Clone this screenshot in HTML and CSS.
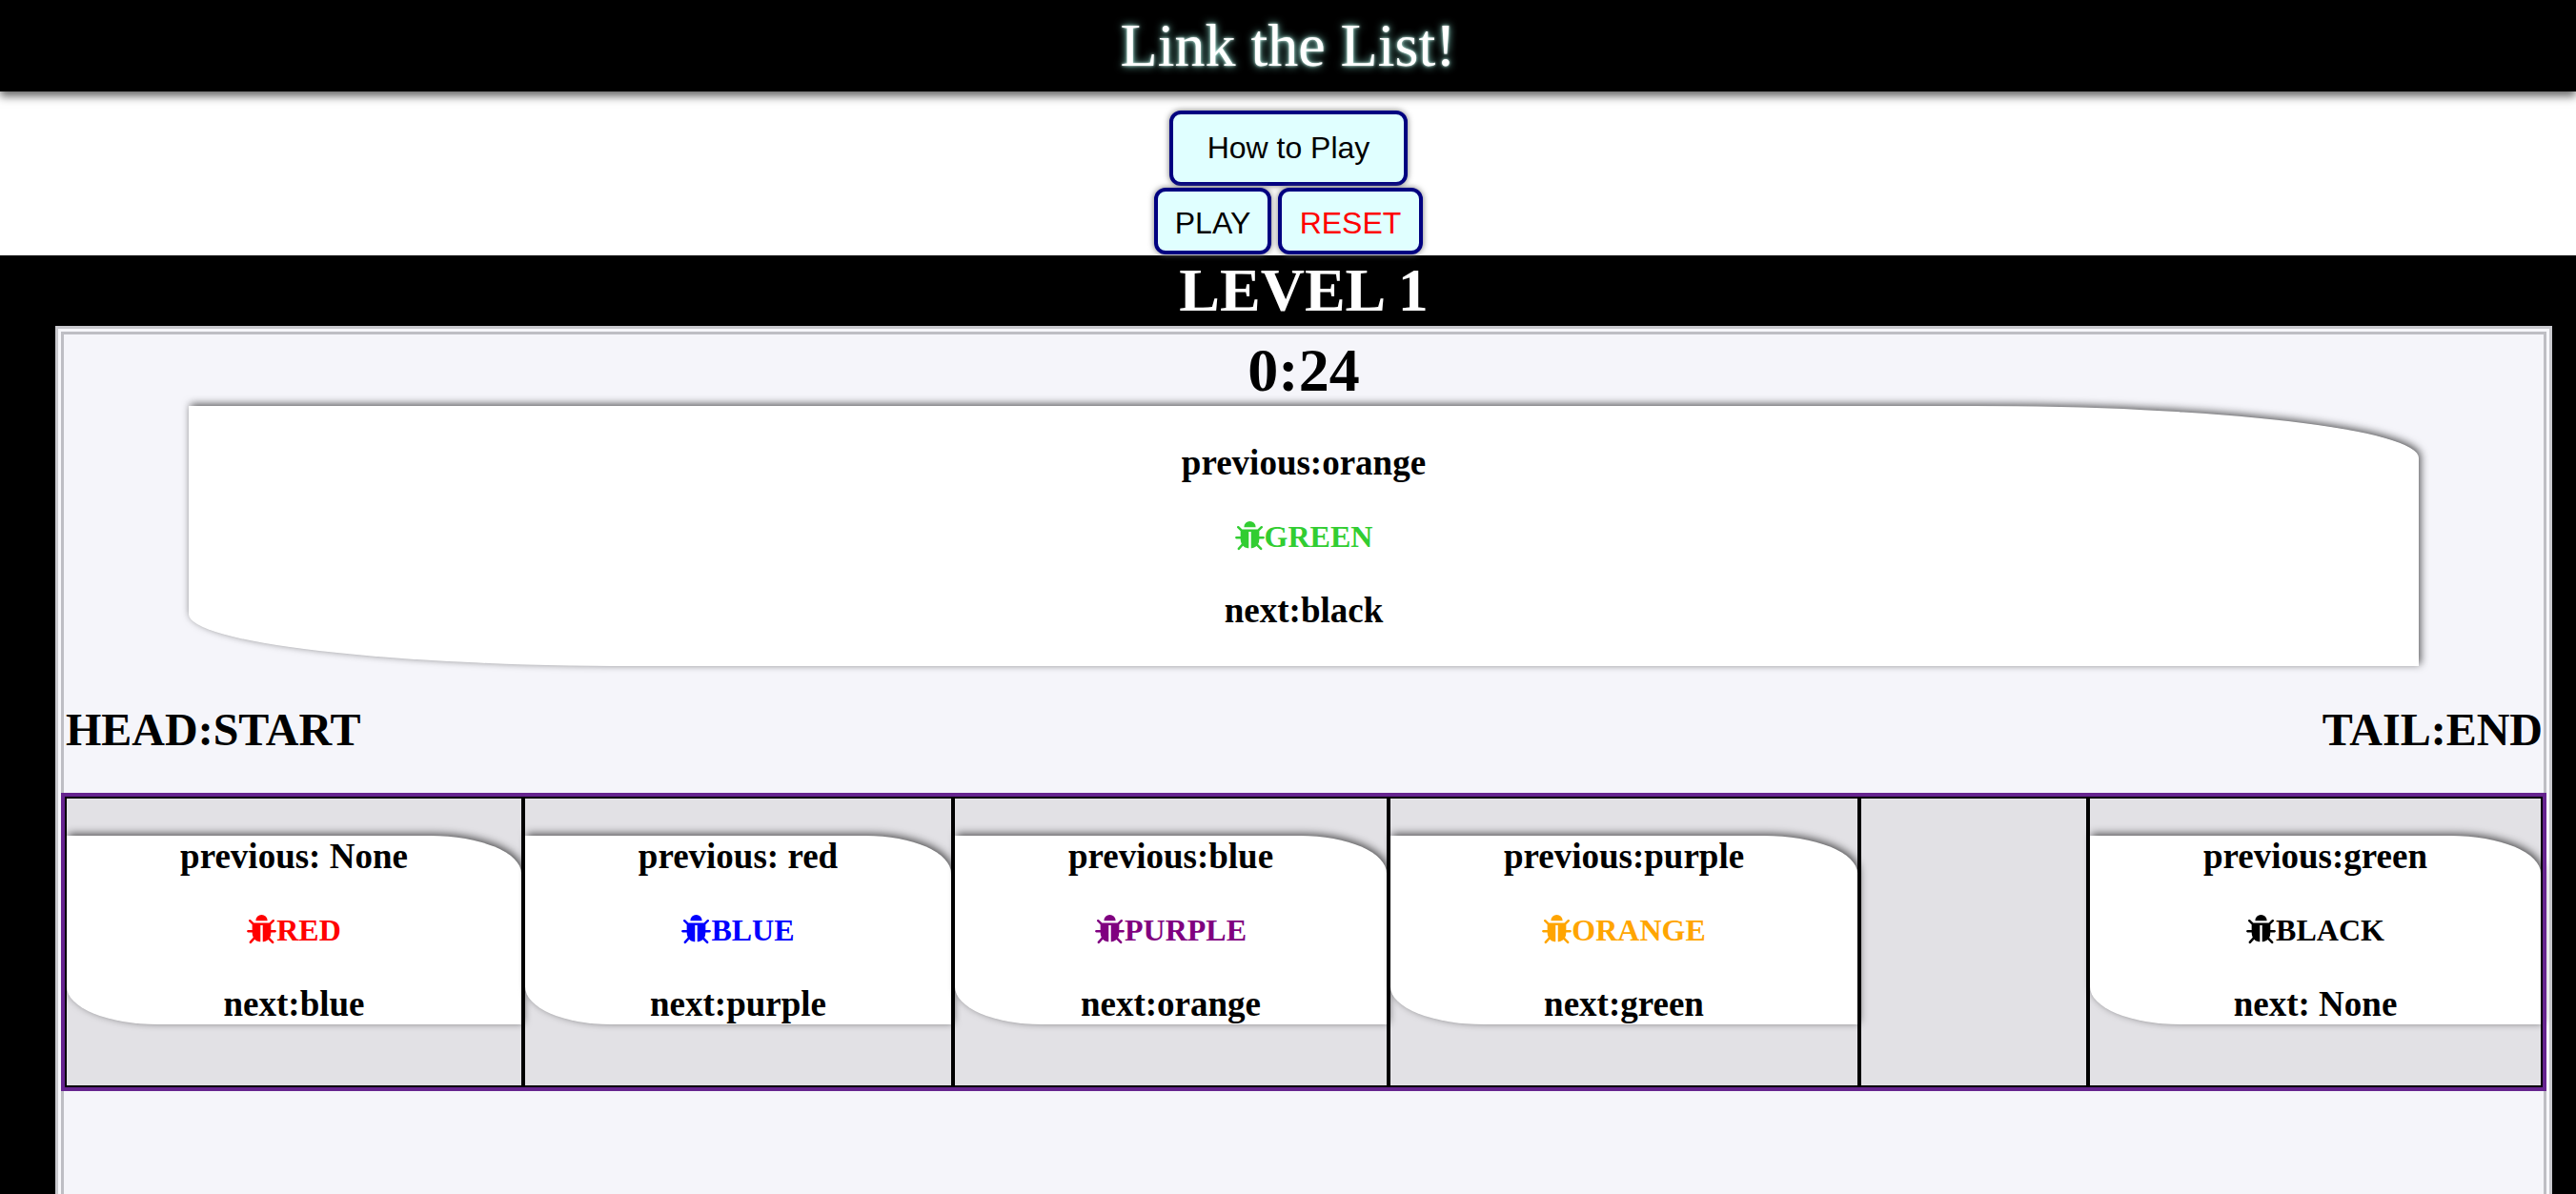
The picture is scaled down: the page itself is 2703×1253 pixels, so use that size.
FILE: index.html
```html
<!DOCTYPE html>
<html lang="en">
<head>
  <meta charset="UTF-8" />
  <title>Link the List!</title>
  <link rel="stylesheet" href="styles.css">
</head>
<body>
  <svg class="icon-defs" aria-hidden="true">
    <symbol id="bug" viewBox="96 64 1600 1664">
      <path d="M1696 960q0 26-19 45t-45 19h-224q0 171-67 290l208 209q19 19 19 45t-19 45q-18 19-45 19t-45-19l-198-197q-5 5-15 13t-42 28.5-65 36.5-82 29-97 13v-896h-128v896q-51 0-101.5-13.5t-87-33-66-39-43.5-32.5l-15-14-183 207q-20 21-48 21-24 0-43-16-19-18-20.5-44.5t15.5-46.5l202-227q-58-114-58-274h-224q-26 0-45-19t-19-45 19-45 45-19h224v-294l-173-173q-19-19-19-45t19-45 45-19 45 19l173 173h844l173-173q19-19 45-19t45 19 19 45-19 45l-173 173v294h224q26 0 45 19t19 45zm-480-576h-640q0-133 93.5-226.5t226.5-93.5 226.5 93.5 93.5 226.5z"/>
    </symbol>
  </svg>

  <header class="top-bar">
    <h1>Link the List!</h1>
  </header>

  <div class="controls">
    <button class="btn btn-help">How to Play</button>
    <div class="btn-row">
      <button class="btn btn-play">PLAY</button>
      <button class="btn btn-reset">RESET</button>
    </div>
  </div>

  <main class="game">
    <h2 class="level">LEVEL 1</h2>
    <section class="board">
      <div class="timer">0:24</div>

      <div class="node node-active">
        <p>previous:orange</p>
        <p class="bug-name green"><svg class="bug"><use href="#bug"/></svg>GREEN</p>
        <p>next:black</p>
      </div>

      <div class="ends">
        <span>HEAD:START</span>
        <span>TAIL:END</span>
      </div>

      <div class="list">
        <div class="slot">
          <div class="node">
            <p>previous: None</p>
            <p class="bug-name red"><svg class="bug"><use href="#bug"/></svg>RED</p>
            <p>next:blue</p>
          </div>
        </div>
        <div class="slot">
          <div class="node">
            <p>previous: red</p>
            <p class="bug-name blue"><svg class="bug"><use href="#bug"/></svg>BLUE</p>
            <p>next:purple</p>
          </div>
        </div>
        <div class="slot">
          <div class="node">
            <p>previous:blue</p>
            <p class="bug-name purple"><svg class="bug"><use href="#bug"/></svg>PURPLE</p>
            <p>next:orange</p>
          </div>
        </div>
        <div class="slot">
          <div class="node">
            <p>previous:purple</p>
            <p class="bug-name orange"><svg class="bug"><use href="#bug"/></svg>ORANGE</p>
            <p>next:green</p>
          </div>
        </div>
        <div class="slot"></div>
        <div class="slot">
          <div class="node">
            <p>previous:green</p>
            <p class="bug-name black"><svg class="bug"><use href="#bug"/></svg>BLACK</p>
            <p>next: None</p>
          </div>
        </div>
      </div>
    </section>
  </main>
</body>
</html>
```

FILE: styles.css
```css
html, body {
  height: 100%;
}
body {
  margin: 0;
  overflow: hidden;
  background-color: #ffffff;
  font-family: "Liberation Serif", "Times New Roman", serif;
  color: #000000;
}
.icon-defs {
  display: none;
}
.top-bar {
  position: relative;
  z-index: 1;
  height: 96px;
  background-color: #000000;
  box-shadow: 0 5px 9px #666666;
  text-align: center;
}
.top-bar h1 {
  margin: 0;
  font-size: 64px;
  font-weight: normal;
  line-height: 96px;
  color: #ffffff;
  text-shadow: 0 0 3px #d8fff4, 0 0 8px #8fe8d8;
}
.controls {
  display: flex;
  flex-direction: column;
  align-items: center;
  gap: 2px;
  height: 172px;
  padding: 20px 0 0 1px;
  box-sizing: border-box;
}
.btn-row {
  display: flex;
  gap: 7px;
}
.btn {
  box-sizing: border-box;
  height: 70px;
  padding: 5px 0 0;
  border: 4px solid #000080;
  border-radius: 12px;
  background-color: #e0ffff;
  box-shadow: 0 0 6px #777777;
  font-family: "Liberation Sans", Arial, sans-serif;
  font-size: 32px;
  color: #000000;
}
.btn-help {
  width: 250px;
  height: 79px;
  padding-top: 0;
}
.btn-play {
  width: 123px;
}
.btn-reset {
  width: 152px;
  color: #ff0000;
}
.game {
  height: 985px;
  overflow: hidden;
  padding: 0 25px 0 58px;
  background-color: #000000;
}
.level {
  margin: 0;
  font-size: 64px;
  font-weight: bold;
  line-height: 74px;
  color: #ffffff;
  text-align: center;
}
.board {
  box-sizing: border-box;
  height: 1000px;
  padding: 7px 6px 0;
  border: 3px solid #c9c9ce;
  background-color: #f5f5fa;
  box-shadow: inset 0 0 0 3px #f7f7fb, inset 0 0 0 6px #bebec4;
}
.timer {
  font-size: 64px;
  font-weight: bold;
  line-height: 74px;
  text-align: center;
}
.node {
  box-sizing: border-box;
  display: flex;
  flex-direction: column;
  gap: 34.5px;
  height: 198px;
  background-color: #ffffff;
  border-radius: 0 20% 0 20%;
  box-shadow: 2px -2px 8px rgba(0, 0, 0, 0.65);
  font-size: 37px;
  font-weight: bold;
  line-height: 43px;
  text-align: center;
}
.node p {
  margin: 0;
}
.node-active {
  height: 273px;
  width: 2340px;
  margin: 0 auto;
  padding-top: 38px;
}
.bug-name {
  display: flex;
  justify-content: center;
  align-items: center;
  font-size: 32px;
}
.bug {
  width: 31px;
  height: 32px;
  fill: currentColor;
}
.red { color: #ff0000; }
.blue { color: #0000ff; }
.purple { color: #800080; }
.orange { color: #ffa500; }
.green { color: #32cd32; }
.black { color: #000000; }
.ends {
  display: flex;
  justify-content: space-between;
  padding: 39px 1px 43px 2px;
  font-size: 48px;
  font-weight: bold;
  line-height: 55px;
}
.list {
  display: grid;
  grid-template-columns: 481px 451px 457px 494px 240px 473px;
  box-sizing: border-box;
  width: 2600px;
  height: 305px;
  margin: 0 1px;
  border: 2px solid #000000;
  outline: 4px solid #66248f;
  background-color: #e2e1e5;
}
.slot {
  padding-top: 39px;
  border-right: 4px solid #000000;
}
.slot:last-child {
  border-right: none;
}
```
